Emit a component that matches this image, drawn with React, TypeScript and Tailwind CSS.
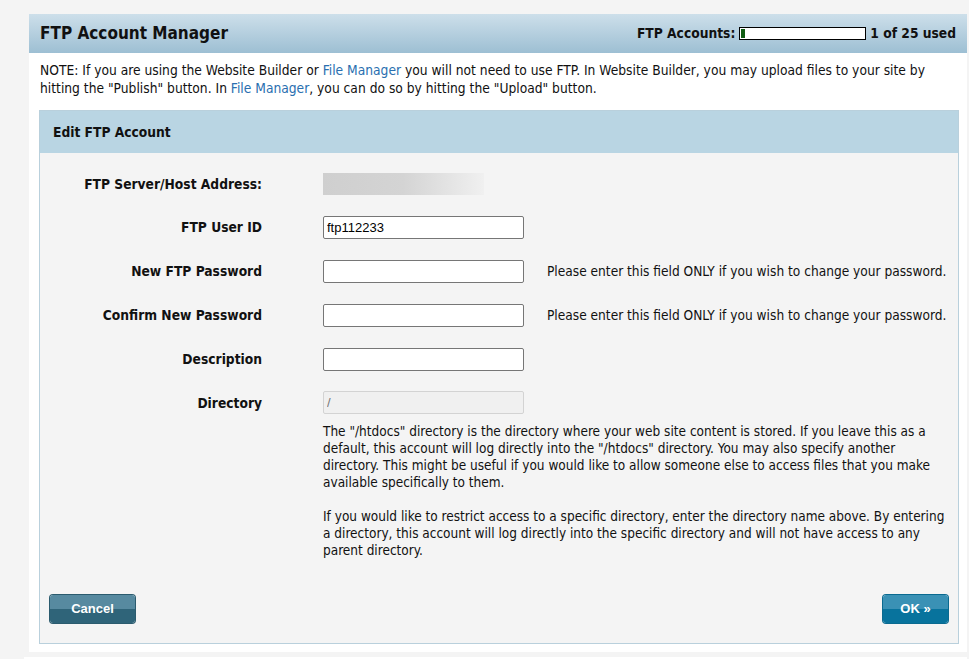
import React from "react";

const font = { fontFamily: '"DejaVu Sans Condensed", "DejaVu Sans", sans-serif' };
const arial = { fontFamily: '"Liberation Sans", Arial, sans-serif' };

function Row({ label, children, help }: { label: string; children: React.ReactNode; help?: string }) {
  return (
    <div className="flex items-center h-[43.8px]">
      <div className="w-[222px] text-right font-bold text-[13.7px] text-[#111] whitespace-nowrap">{label}</div>
      <div className="ml-[61px] w-[201px] flex items-center">{children}</div>
      {help && <div className="ml-[23px] text-[13.6px] text-[#111] whitespace-nowrap">{help}</div>}
    </div>
  );
}

export default function App() {
  return (
    <div className="min-h-[659px] bg-[#f4f4f4] pt-[14px] overflow-hidden" style={font}>
      <div className="ml-[29px] w-[938px] bg-white pb-[8px]">
        {/* top header */}
        <div className="h-[39px] flex items-center justify-between px-[11px] bg-gradient-to-b from-[#cddfea] to-[#9dbfd3]">
          <h1 className="text-[17px] font-bold text-[#111]">FTP Account Manager</h1>
          <div className="flex items-center text-[13.7px] font-bold text-[#111]">
            <span>FTP Accounts:</span>
            <div className="ml-[4px] w-[127px] h-[13px] border border-black bg-white p-[1px]">
              <div className="w-[4px] h-full bg-[#0f5c12]" />
            </div>
            <span className="ml-[4px]">1 of 25 used</span>
          </div>
        </div>

        {/* note */}
        <p className="px-[11px] pt-[8px] text-[13.7px] leading-[18px] text-[#111]">
          NOTE: If you are using the Website Builder or <a className="text-[#2a6fb0]">File Manager</a> you will not need to use FTP. In Website Builder, you may upload files to your site by hitting the "Publish" button. In <a className="text-[#2a6fb0]">File Manager</a>, you can do so by hitting the "Upload" button.
        </p>

        {/* edit box */}
        <div className="mt-[13px] ml-[10px] w-[920px] border border-[#b9d0dc] bg-[#f4f4f4]">
          <div className="h-[42px] bg-[#b9d5e3] flex items-center px-[13px] text-[13.7px] font-bold text-[#111]">
            Edit FTP Account
          </div>
          <div className="pt-[9px]">
            <Row label="FTP Server/Host Address:">
              <div className="w-[161px] h-[22px] bg-gradient-to-r from-[#cfcfcf] via-[#d4d4d4] to-[#f0f0f0]" />
            </Row>
            <Row label="FTP User ID">
              <input
                defaultValue="ftp112233"
                className="w-[201px] h-[23px] border border-[#767676] rounded-[2px] bg-white px-[3px] text-[13px] text-black outline-none"
                style={arial}
              />
            </Row>
            <Row label="New FTP Password" help="Please enter this field ONLY if you wish to change your password.">
              <input type="password" className="w-[201px] h-[23px] border border-[#767676] rounded-[2px] bg-white outline-none" />
            </Row>
            <Row label="Confirm New Password" help="Please enter this field ONLY if you wish to change your password.">
              <input type="password" className="w-[201px] h-[23px] border border-[#767676] rounded-[2px] bg-white outline-none" />
            </Row>
            <Row label="Description">
              <input className="w-[201px] h-[23px] border border-[#767676] rounded-[2px] bg-white outline-none" />
            </Row>
            <Row label="Directory">
              <input
                disabled
                defaultValue="/"
                className="w-[201px] h-[23px] border border-[#d3d3d3] rounded-[2px] bg-[#f0f0f0] px-[3px] text-[13px] text-[#777] outline-none"
                style={arial}
              />
            </Row>
            <div className="-mt-[2px] ml-[283px] mr-[10px] text-[13.5px] leading-[17px] text-[#111]">
              <p>
                The "/htdocs" directory is the directory where your web site content is stored. If you leave this as a default, this account will log directly into the "/htdocs" directory. You may also specify another directory. This might be useful if you would like to allow someone else to access files that you make available specifically to them.
              </p>
              <p className="mt-[17px]">
                If you would like to restrict access to a specific directory, enter the directory name above. By entering a directory, this account will log directly into the specific directory and will not have access to any parent directory.
              </p>
            </div>
          </div>
          <div className="flex justify-between px-[10px] pt-[36px] pb-[20px]">
            <button
              className="w-[85px] h-[28px] rounded-[3px] text-white font-bold text-[13px] bg-[linear-gradient(#578aa0_0%,#578aa0_50%,#2f6479_50%,#2f6479_100%)] shadow-[0_0_0_1px_#2b5b6e]"
              style={arial}
            >
              Cancel
            </button>
            <button
              className="w-[65px] h-[28px] rounded-[3px] text-white font-bold text-[13px] bg-[linear-gradient(#3a91b5_0%,#3a91b5_50%,#08739d_50%,#08739d_100%)] shadow-[0_0_0_1px_#0a6a90]"
              style={arial}
            >
              OK »
            </button>
          </div>
        </div>
      </div>
      <div className="mt-[5px] ml-[24px] w-[943px] h-[20px] bg-white" />
    </div>
  );
}
